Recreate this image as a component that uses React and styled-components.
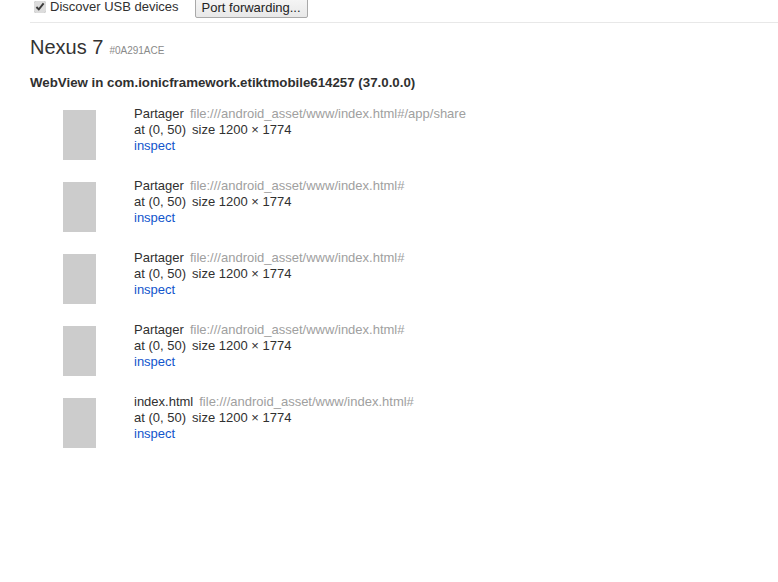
import React from 'react';
import styled, { createGlobalStyle } from 'styled-components';

const GlobalStyle = createGlobalStyle`
    html, body {
        margin: 0;
        padding: 0;
        background: #fff;
        overflow: hidden;
    }
    body {
        font-family: "Liberation Sans", Arial, sans-serif;
        font-size: 13px;
        color: #303030;
    }
`;

const pages = [
    { title: 'Partager', url: 'file:///android_asset/www/index.html#/app/share' },
    { title: 'Partager', url: 'file:///android_asset/www/index.html#' },
    { title: 'Partager', url: 'file:///android_asset/www/index.html#' },
    { title: 'Partager', url: 'file:///android_asset/www/index.html#' },
    { title: 'index.html', url: 'file:///android_asset/www/index.html#' }
];

export default function App() {
    return (
        <Page>
            <GlobalStyle />
            <TopBar>
                <CheckLabel>
                    <Check type="checkbox" defaultChecked />
                    Discover USB devices
                </CheckLabel>
                <Button type="button">Port forwarding...</Button>
            </TopBar>
            <DeviceHeader>
                <DeviceName>Nexus 7</DeviceName>
                <Serial>#0A291ACE</Serial>
            </DeviceHeader>
            <BrowserName>WebView in com.ionicframework.etiktmobile614257 (37.0.0.0)</BrowserName>
            <List>
                {pages.map((p, i) => (
                    <Row key={i}>
                        <Thumb />
                        <Info>
                            <Line>
                                <Title>{p.title}</Title>
                                <Url>{p.url}</Url>
                            </Line>
                            <Line>
                                <Pos>at (0, 50)</Pos>
                                <span>size 1200 × 1774</span>
                            </Line>
                            <Line>
                                <Action href="#">inspect</Action>
                            </Line>
                        </Info>
                    </Row>
                ))}
            </List>
        </Page>
    );
}

const Page = styled.div`
    padding-left: 30px;
    height: 582px;
`;

const TopBar = styled.div`
    display: flex;
    align-items: center;
    height: 24px;
    margin-top: -5px;
    padding-bottom: 3px;
    border-bottom: 1px solid #e8e8e8;
`;

const CheckLabel = styled.label`
    display: flex;
    align-items: center;
    line-height: 16px;
    color: #303030;
`;

const Check = styled.input`
    width: 12px;
    height: 12px;
    margin: 0 4px 0 4px;
    accent-color: #dcdcdc;
`;

const Button = styled.button`
    margin-left: 16px;
    height: 21px;
    padding: 0 6px;
    font-family: "Liberation Sans", Arial, sans-serif;
    font-size: 13px;
    color: #222;
    background: linear-gradient(#f6f6f6, #e8e8e8);
    border: 1px solid #a9a9a9;
    border-radius: 2px;
`;

const DeviceHeader = styled.div`
    display: flex;
    align-items: baseline;
    margin-top: 12px;
    line-height: 24px;
`;

const DeviceName = styled.span`
    font-size: 20px;
    color: #333;
`;

const Serial = styled.span`
    margin-left: 6px;
    font-size: 10px;
    color: #8a8a8a;
`;

const BrowserName = styled.div`
    margin-top: 12px;
    font-size: 13.3px;
    font-weight: bold;
    line-height: 16px;
    color: #303030;
`;

const List = styled.div`
    margin-top: 15px;
`;

const Row = styled.div`
    display: flex;
    height: 72px;
`;

const Thumb = styled.div`
    width: 33px;
    height: 50px;
    margin: 4px 38px 0 33px;
    background: #cccccc;
`;

const Info = styled.div`
    display: flex;
    flex-direction: column;
`;

const Line = styled.div`
    line-height: 16px;
    white-space: nowrap;
`;

const Title = styled.span`
    color: #303030;
`;

const Url = styled.span`
    margin-left: 6px;
    color: #a0a0a0;
`;

const Pos = styled.span`
    margin-right: 6px;
`;

const Action = styled.a`
    color: #1155cc;
    text-decoration: none;
`;
